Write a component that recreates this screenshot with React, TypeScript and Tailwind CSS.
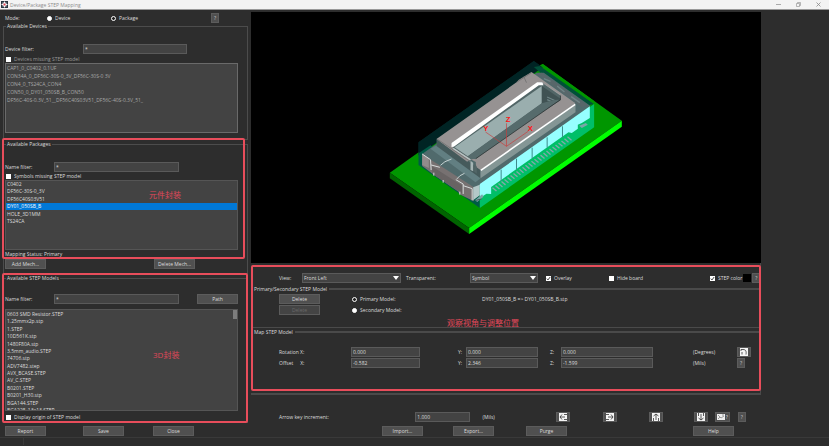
import { useState, type ReactNode } from "react";

const DEVICES = [
  "CAP1_0_C0402_0.1UF",
  "CON34A_0_DF56C-30S-0_3V_DF56C-30S-0 3V",
  "CON4_0_TS24CA_CON4",
  "CON50_0_DY01_050SB_B_CON50",
  "DF56C-40S-0.3V_51__DF56C40S03V51_DF56C-40S-0.3V_51_",
];

const PACKAGES = ["C0402", "DF56C-30S-0_3V", "DF56C40S03V51", "DY01_050SB_B", "HOLE_3D1MM", "TS24CA"];

const STEP_MODELS = [
  "0603 SMD Resistor.STEP",
  "1.25mmx2p.stp",
  "1.STEP",
  "10D561K.stp",
  "1480F80A.stp",
  "3.5mm_audio.STEP",
  "74706.stp",
  "ADV7482.step",
  "AVX_BCASE.STEP",
  "AV_C.STEP",
  "B0201.STEP",
  "B0201_H30.stp",
  "BGA144.STEP",
  "BGA225_13x13.STEP",
];

const PINS = Array.from({ length: 26 }, (_, i) => i);

function Button({ children, disabled = false }: { children: ReactNode; disabled?: boolean }) {
  return (
    <button
      disabled={disabled}
      className="h-[10px] w-[41px] shrink-0 border border-[#5c5c5c] bg-[#505050] text-center leading-[8px] disabled:bg-[#444444] disabled:text-[#6a6a6a]"
    >
      {children}
    </button>
  );
}

function HelpButton() {
  return (
    <button className="h-[10px] w-2 shrink-0 border border-[#5c5c5c] bg-[#505050] text-center leading-[8px] text-[#c4c4c4]">
      ?
    </button>
  );
}

function IconButton({ label, children }: { label: string; children: ReactNode }) {
  return (
    <button
      aria-label={label}
      className="flex h-[10px] w-[14px] shrink-0 items-center justify-center border border-[#5c5c5c] bg-[#505050]"
    >
      <svg viewBox="0 0 8 8" className="size-2" fill="none" stroke="#333" strokeWidth=".8">
        <path d="M0 0h8v8H0z" fill="#f4f4f4" stroke="none" />
        {children}
      </svg>
    </button>
  );
}

function TextBox({ id, value, label }: { id: string; value: string; label?: string }) {
  return (
    <input
      id={id}
      aria-label={label}
      defaultValue={value}
      className="h-[10px] w-full min-w-0 border border-[#5a5a5a] bg-[#434343] px-px leading-[8px] outline-none"
    />
  );
}

function Check({ label, checked = false, dim = false }: { label: string; checked?: boolean; dim?: boolean }) {
  const [on, setOn] = useState(checked);
  return (
    <label className={`flex h-2 items-center gap-[3px] whitespace-nowrap ${dim ? "text-[#999999]" : ""}`}>
      <span className="relative size-[5px] shrink-0">
        <input
          type="checkbox"
          checked={on}
          onChange={() => setOn(!on)}
          className="block size-[5px] appearance-none bg-white"
        />
        {on && (
          <svg viewBox="0 0 6 6" className="pointer-events-none absolute inset-0 size-[5px]">
            <path d="M1 3.2 2.4 4.7 5 1.2" fill="none" stroke="#222" strokeWidth="1" />
          </svg>
        )}
      </span>
      {label}
    </label>
  );
}

function Radio({ name, label, checked = false }: { name: string; label: string; checked?: boolean }) {
  return (
    <label className="flex h-2 items-center gap-[3px] whitespace-nowrap">
      <input
        type="radio"
        name={name}
        defaultChecked={checked}
        className="size-[5px] shrink-0 appearance-none rounded-full border border-white bg-white checked:bg-[#222222]"
      />
      {label}
    </label>
  );
}

function Dropdown({ id, value }: { id: string; value: string }) {
  return (
    <div className="relative">
      <select
        id={id}
        defaultValue={value}
        className="block h-[10px] w-full appearance-none border border-[#5a5a5a] bg-[#434343] px-px leading-[8px]"
      >
        <option>{value}</option>
      </select>
      <svg viewBox="0 0 6 4" className="pointer-events-none absolute top-[3px] right-[2px] h-1 w-[6px]">
        <path d="M0 0h6L3 4z" fill="#fff" />
      </svg>
    </div>
  );
}

function Group({ title, className = "", children }: { title: string; className?: string; children: ReactNode }) {
  return (
    <fieldset className={`min-w-0 border border-[#4c4c4c] pr-[9px] pl-px ${className}`}>
      <legend className="ml-px px-px leading-[8px]">{title}</legend>
      {children}
    </fieldset>
  );
}

function Section({ title, className = "", children }: { title: string; className?: string; children?: ReactNode }) {
  return (
    <section className={className}>
      <div className="flex h-2 items-center gap-[2px] pl-[3px]">
        <h2 className="leading-[8px]">{title}</h2>
        <div className="h-[2px] flex-1 bg-[#4a4a4a]" />
      </div>
      {children}
    </section>
  );
}

// Isometric view of the connector on its board
function ModelView() {
  return (
    <svg viewBox="0 0 509 251" className="block h-[251px] w-full bg-black" role="img" aria-label="STEP model">
      <g transform="translate(129 38) scale(.3333)">
        <path d="M114 277 460 33 641 162V232L298 474 114 345Z" fill="#002424" />
        <path d="M28 368 487 42 724 212 266 534Z" fill="#009600" />
        <path d="M28 368 266 534V552L28 385Z" fill="#006400" />
        <path d="M266 534 724 212V230L266 552Z" fill="#00ff00" />
        <path d="M114 277 460 33 487 52 160 284 114 316Z" fill="#002424" />
        <path d="M460 51 478 48 641 162 600 172Z" fill="#005038" />
        <path d="M478 46 487 42 641 153V162Z" fill="#009600" />
        <path d="M114 310 150 286 298 400V474L114 345Z" fill="#005a46" />
        <path d="M298 404 641 162V232L298 474Z" fill="#00bf68" />

        {/* base */}
        <path d="M125 312 468 68 490 68 630 168 298 408 280 416Z" fill="#506a6c" />
        <path d="M150 296 178 280 300 365V385L285 397Z" fill="#627f82" />
        <path d="M470 72 484 68 622 164 604 172Z" fill="#58676a" />
        <path d="M490 86 510 94M530 108 552 126M572 140 598 158" stroke="#6f8587" strokeWidth="4" />
        <path d="M125 312 280 412V454L240 434 232 424 160 374 125 348Z" fill="#777171" />
        <path d="M125 312 145 325V354L125 345Z" fill="#928c8c" />
        <path d="M154 349 246 407V432L156 372Z" fill="#686363" />
        <path d="M125 312 150 329 152 360M152 345 178 352M226 389 248 402V432M248 407 275 416V451" stroke="#d9dddd" strokeWidth="3" fill="none" />
        <path d="M180 346Q190 334 213 327M229 387Q236 376 252 370" stroke="#c6d2d2" strokeWidth="3" fill="none" />
        <path d="M278 412 298 404V436L278 451Z" fill="#b4c8c8" />
        <path d="M160 368v9M188 390v8M238 425v9" stroke="#d9dddd" strokeWidth="3" />

        {/* contact side */}
        <path d="M298 402 628 169V204L604 219 592 224V236L574 249 564 247 332 411V432L318 431 298 444Z" fill="#96ffff" />
        <path d="M362 359V393M408 326V359M455 293V325M500 262V293M546 229V262" stroke="#3c8989" strokeWidth="3" />
        {PINS.map((i) => (
          <path
            key={i}
            d={`M${336 + i * 9} ${413 - i * 6.1}l12 10`}
            stroke="#80a9a9"
            strokeWidth="4"
          />
        ))}
        <path d="M284 450 305 433 309 440 290 456ZM596 227 616 219 622 224 604 234Z" fill="#78a6a8" />
        <path d="M287 451 303 447" stroke="#405858" strokeWidth="3" />

        {/* housing */}
        <path d="M168 267 300 360V385L168 288Z" fill="#455a5b" />
        <path d="M300 360 585 162V187L300 385Z" fill="#849695" />
        <path d="M168 267 408 97 415 89 453 66 585 160 300 360 286 350V336L270 328 260 335Z" fill="#969292" />
        <path d="M213 280 470 99 484 96 540 136V149L286 326 272 328 218 294Z" fill="#526667" />
        <path d="M222 292 484 108V160L262 319Z" fill="#9aaeae" />
        <path d="M484 108 540 146V151L484 187Z" fill="#405253" />
        <path d="M500 141 526 153M500 149 516 156" stroke="#6d8385" strokeWidth="4" />
        <path d="M262 319 484 160 520 150 538 149 286 326 272 328Z" fill="#566b6c" />
        <path d="M286 326 540 149V137" stroke="#252c2c" strokeWidth="2" fill="none" />
        <path d="M213 279 470 97H486L489 106H475L220 290 213 291Z" fill="#fff" />
        <path d="M486 98 538 134" stroke="#aaaaaa" strokeWidth="2" />
        <path d="M218 295 270 330" stroke="#b8c4c4" strokeWidth="4" />
        <path d="M301 361 584 163" stroke="#fff" strokeWidth="5" />
        <path d="M270 332 278 338V364L270 360Z" fill="#a5b5b5" />
        <path d="M281 337 289 350V371L281 365Z" fill="#526667" />
        <path d="M430 80 438 98M408 97 453 68" stroke="#686868" strokeWidth="2" />
        <path d="M170 267 270 335" stroke="#777" strokeWidth="3" />

        {/* axes */}
        <path d="M378 289V220M378 289 315 246M378 289 443 244" stroke="#c83c3c" strokeWidth="2" fill="none" />
        <g fill="#ff1414" className="font-['Liberation_Sans'] text-[23px] font-bold">
          <text x="376" y="215">Z</text>
          <text x="308" y="243">Y</text>
          <text x="442" y="243">X</text>
        </g>
      </g>
    </svg>
  );
}

export default function App() {
  const [selected, setSelected] = useState("DY01_050SB_B");

  return (
    <div className="relative flex min-h-screen flex-col overflow-hidden bg-[#2d2d2d] font-['Open_Sans','Noto_Sans_CJK_SC',sans-serif] text-[5px] leading-[8px] text-[#dcdcdc]">
      <header className="flex h-[10px] items-center border-b border-[#999999] bg-[#f3f3f3] pr-2 pl-px text-[#8c8c8c]">
        <svg viewBox="0 0 14 14" className="mr-[2px] size-[7px]">
          <path d="M0 0h14v14H0z" fill="#26333e" />
          <path d="M7 1v12M1 7h12" stroke="#fff" strokeWidth="2" />
          <path d="M3 3h3v3H3zM8 3h3v3H8zM3 8h3v3H3zM8 8h3v3H8z" fill="#d8dfe2" />
          <path d="M5 5h4v4H5z" fill="#d63d4b" />
        </svg>
        <h1 className="flex-1">Device/Package STEP Mapping</h1>
        <div className="flex gap-[15px]">
          <button aria-label="Minimize">
            <svg viewBox="0 0 5 5" className="block size-[5px]" stroke="#aaa" fill="none">
              <path d="M0 2.5h5" />
            </svg>
          </button>
          <button aria-label="Restore">
            <svg viewBox="0 0 5 5" className="block size-[5px]" stroke="#999" strokeWidth=".7" fill="none">
              <path d="M.5 1.5h3v3h-3zM1.5 1.5v-1h3v3h-1" />
            </svg>
          </button>
          <button aria-label="Close window">
            <svg viewBox="0 0 5 5" className="block size-[5px]" stroke="#888" strokeWidth=".8">
              <path d="m.5.5 4 4m0-4-4 4" />
            </svg>
          </button>
        </div>
      </header>

      <div className="flex">
        <div className="w-[251px] shrink-0 pr-[3px] pl-[3px]">
          <div className="grid h-3 grid-cols-[42px_64px_100px_auto] items-center justify-start pt-[3px] pl-[2px]">
            <span>Mode:</span>
            <Radio name="mode" label="Device" />
            <Radio name="mode" label="Package" checked />
            <HelpButton />
          </div>

          <Group title="Available Devices" className="h-[118px]">
            <div className="mt-[14px] flex items-center">
              <label htmlFor="device-filter" className="w-[78px]">Device filter:</label>
              <div className="w-[104px]">
                <TextBox id="device-filter" value="*" />
              </div>
            </div>
            <div className="mt-px pl-px">
              <Check label="Devices missing STEP model" dim />
            </div>
            <div className="h-[70px] border border-[#6a6a6a] bg-[#434343]">
              <ul role="listbox" aria-label="Devices" className="flex h-[38px] flex-col justify-between pl-px leading-[8px] text-[#a8a8a8]">
                {DEVICES.map((d) => (
                  <li key={d} role="option" aria-selected={false} className="h-2 whitespace-nowrap">{d}</li>
                ))}
              </ul>
            </div>
          </Group>

          <Group title="Available Packages" className="h-[134px]">
            <div className="mt-[14px] flex items-center">
              <label htmlFor="package-filter" className="w-[49px]">Name filter:</label>
              <div className="w-[125px]">
                <TextBox id="package-filter" value="*" />
              </div>
            </div>
            <div className="pl-px">
              <Check label="Symbols missing STEP model" />
            </div>
            <div className="h-[70px] border border-[#555555] bg-[#434343]">
              <ul role="listbox" aria-label="Packages" className="flex h-[44px] flex-col justify-between">
                {PACKAGES.map((p) => (
                  <li
                    key={p}
                    role="option"
                    aria-selected={p === selected}
                    onClick={() => setSelected(p)}
                    className={`h-[7px] pl-px leading-[7px] ${p === selected ? "bg-[#0078d7] text-white" : ""}`}
                  >
                    {p}
                  </li>
                ))}
              </ul>
            </div>
            <p className="mb-px">Mapping Status: Primary</p>
            <div className="flex gap-[108px]">
              <Button>Add Mech...</Button>
              <Button>Delete Mech...</Button>
            </div>
          </Group>

          <Group title="Available STEP Models" className="h-[149px]">
            <div className="mt-[12px] flex items-center">
              <label htmlFor="model-filter" className="w-[49px]">Name filter:</label>
              <div className="mr-[18px] w-[125px]">
                <TextBox id="model-filter" value="*" />
              </div>
              <Button>Path</Button>
            </div>
            <div className="mt-[5px] flex h-[102px] overflow-hidden border border-[#555555] bg-[#434343]">
              <ul role="listbox" aria-label="STEP models" className="flex h-[103px] flex-1 flex-col justify-between pl-px">
                {STEP_MODELS.map((m) => (
                  <li key={m} role="option" aria-selected={false} className="h-[7px] leading-[8px]">{m}</li>
                ))}
              </ul>
              <div className="h-[9px] w-1 bg-[#7d7d7d]" />
            </div>
            <div className="mt-[2px] pl-px">
              <Check label="Display origin of STEP model" />
            </div>
          </Group>
        </div>

        <main className="min-w-0 flex-1 pt-[2px]">
          <ModelView />

          <div className="border-r border-[#4a4a4a] pt-[10px]">
            <div className="grid grid-cols-[28fr_23fr_99fr_5fr_64fr_68fr_8fr_63fr_101fr_50fr] items-center">
              <span />
              <label htmlFor="view">View:</label>
              <Dropdown id="view" value="Front Left" />
              <span />
              <label htmlFor="transparent">Transparent:</label>
              <Dropdown id="transparent" value="Symbol" />
              <span />
              <Check label="Overlay" checked />
              <Check label="Hide board" />
              <div className="flex min-w-0 items-center gap-px">
                <Check label="STEP color" checked />
                <button aria-label="Pick STEP color" className="size-2 shrink-0 bg-black" />
                <HelpButton />
              </div>
            </div>

            <Section title="Primary/Secondary STEP Model" className="mt-[2px] h-[43px] border-b border-[#4a4a4a]">
              <div className="mt-px grid grid-cols-[28fr_73fr_130fr_278fr] items-center gap-y-px">
                <span />
                <Button>Delete</Button>
                <Radio name="model" label="Primary Model:" checked />
                <span>DY01_050SB_B =&gt; DY01_050SB_B.stp</span>
                <span />
                <Button disabled>Delete</Button>
                <Radio name="model" label="Secondary Model:" />
              </div>
            </Section>

            <Section title="Map STEP Model" className="h-[67px] border-b-2 border-[#4a4a4a]">
              <div className="mt-[11px] grid grid-cols-[28fr_72fr_69fr_38fr_8fr_72fr_12fr_11fr_92fr_40fr_44fr_23fr] items-center gap-y-px">
                <span />
                <label htmlFor="rot-x">Rotation X:</label>
                <TextBox id="rot-x" value="0.000" />
                <span />
                <label htmlFor="rot-y">Y:</label>
                <TextBox id="rot-y" value="0.000" />
                <span />
                <label htmlFor="rot-z">Z:</label>
                <TextBox id="rot-z" value="0.000" />
                <span />
                <span>(Degrees)</span>
                <IconButton label="Rotate">
                  <path d="M1 3V1.5h2M3 1.5c3 0 3.5 2 3 5M2 4v2.5" />
                </IconButton>

                <span />
                <label htmlFor="off-x" className="flex gap-[7px]"><span>Offset</span><span>X:</span></label>
                <TextBox id="off-x" value="-0.582" />
                <span />
                <label htmlFor="off-y">Y:</label>
                <TextBox id="off-y" value="2.346" />
                <span />
                <label htmlFor="off-z">Z:</label>
                <TextBox id="off-z" value="-1.599" />
                <span />
                <span>(Mils)</span>
                <HelpButton />
              </div>
            </Section>
          </div>

          <div className="mt-[17px] grid grid-cols-[28fr_136fr_55fr_12fr_73fr_47fr_46fr_45fr_21fr_23fr_23fr] items-center">
            <span />
            <label htmlFor="increment">Arrow key increment:</label>
            <TextBox id="increment" value="1.000" />
            <span />
            <span>(Mils)</span>
            <IconButton label="Move left">
              <path d="M3 1.5 1 4l2 2.5M1 4h5M5 1.5h3M5 6.5h3" />
            </IconButton>
            <IconButton label="Move right">
              <path d="M5 1.5 7 4 5 6.5M7 4H2M0 1.5h3M0 6.5h3" />
            </IconButton>
            <IconButton label="Move up">
              <path d="M1.5 3 4 1l2.5 2M4 1v6M1.5 5v3M6.5 5v3" />
            </IconButton>
            <IconButton label="Move down">
              <path d="M1.5 5 4 7l2.5-2M4 7V1M1.5 0v3M6.5 0v3" />
            </IconButton>
            <button className="flex h-[10px] w-[15px] items-center justify-center gap-px border border-[#5c5c5c] bg-[#505050] leading-[8px]">
              <svg viewBox="0 0 8 6" className="h-[6px] w-2" stroke="#777" strokeWidth=".7" fill="none">
                <path d="M0 0h8v6H0z" fill="#eee" stroke="none" />
                <path d="m1 1 3 3 3-2M1 5l2-2M5 1l2 0" />
              </svg>
              ?
            </button>
            <HelpButton />
          </div>
        </main>
        <div className="w-[68px] shrink-0" />
      </div>

      <footer className="mt-[2px] flex h-[13px] border-b border-[#393939] pl-[5px] pt-px">
        <div className="flex w-[377px] shrink-0">
          <div className="w-[78px]"><Button>Report</Button></div>
          <div className="w-[70px]"><Button>Save</Button></div>
          <Button>Close</Button>
        </div>
        <div className="w-[71px]"><Button>Import...</Button></div>
        <div className="w-[73px]"><Button>Export...</Button></div>
        <div className="w-[167px]"><Button>Purge</Button></div>
        <Button>Help</Button>
      </footer>
      <div className="h-[7px] w-6 border-r border-[#393939]" />

      {/* annotations over the dialog */}
      <div className="pointer-events-none absolute top-[138px] left-[2px] h-[121px] w-[243px] rounded-xs border-2 border-[#e84d5b]" />
      <div className="pointer-events-none absolute top-[273px] left-[2px] h-[150px] w-[246px] rounded-xs border-2 border-[#e84d5b]" />
      <div className="pointer-events-none absolute top-[265px] left-[251px] h-[126px] w-[510px] rounded-xs border-2 border-[#e84d5b]" />
      <p className="pointer-events-none absolute top-[190px] left-[149px] text-[8px] leading-[10px] text-[#e0485a]">元件封装</p>
      <p className="pointer-events-none absolute top-[350px] left-[153px] text-[8px] leading-[10px] text-[#e0485a]">3D封装</p>
      <p className="pointer-events-none absolute top-[318px] left-[447px] text-[8px] leading-[10px] text-[#e0485a]">观察视角与调整位置</p>
    </div>
  );
}
